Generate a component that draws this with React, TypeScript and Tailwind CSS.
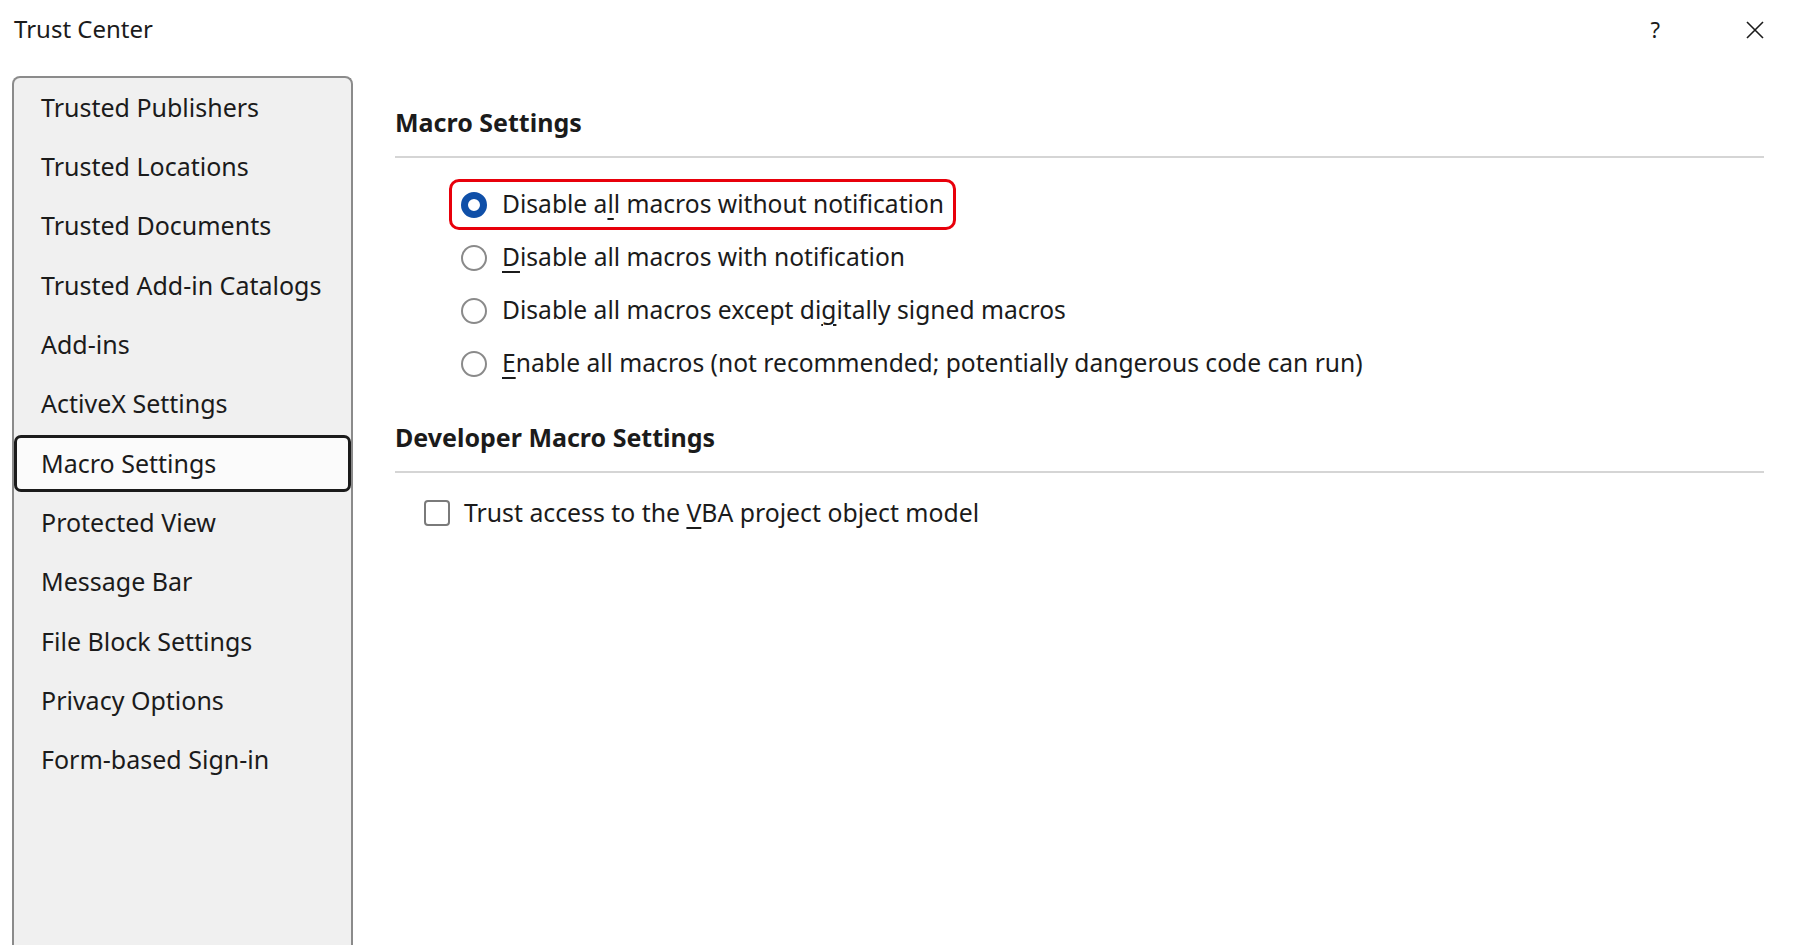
import { useState } from "react";

const navItems = [
  "Trusted Publishers",
  "Trusted Locations",
  "Trusted Documents",
  "Trusted Add-in Catalogs",
  "Add-ins",
  "ActiveX Settings",
  "Macro Settings",
  "Protected View",
  "Message Bar",
  "File Block Settings",
  "Privacy Options",
  "Form-based Sign-in",
];

// label split so the access key letter can be underlined
const macroOptions = [
  { pre: "Disable a", key: "l", post: "l macros without notification" },
  { pre: "", key: "D", post: "isable all macros with notification" },
  { pre: "Disable all macros except di", key: "g", post: "itally signed macros" },
  { pre: "", key: "E", post: "nable all macros (not recommended; potentially dangerous code can run)" },
];

function Radio({ checked }: { checked: boolean }) {
  if (checked) {
    return (
      <span className="w-[26px] h-[26px] rounded-full border-[7px] border-[#0f4fa8] bg-white shrink-0"></span>
    );
  }
  return (
    <span className="w-[26px] h-[26px] rounded-full border-2 border-[#8a8a8a] bg-white shrink-0"></span>
  );
}

export default function App() {
  const [selected, setSelected] = useState(0);
  const [vba, setVba] = useState(false);

  return (
    <div className="w-[1800px] h-[945px] bg-white overflow-hidden flex flex-col text-[#1b1b1b] font-['Noto_Sans',sans-serif]">
      <div className="h-[76px] flex items-start justify-between shrink-0">
        <div className="pl-[14px] pt-[12px] text-[24px] leading-[34px]">Trust Center</div>
        <div className="flex items-center pt-[12px] pr-[36px] gap-[86px]">
          <span className="text-[22px] leading-[34px]">?</span>
          <svg width="18" height="18" viewBox="0 0 18 18" className="mt-[1px]">
            <path d="M1 1 L17 17 M17 1 L1 17" stroke="#1b1b1b" strokeWidth="1.6" fill="none" />
          </svg>
        </div>
      </div>

      <div className="flex flex-1 min-h-0">
        <div className="ml-[12px] w-[341px] bg-[#f0f0f0] border-2 border-b-0 border-[#8b8b8b] rounded-t-[8px] flex flex-col shrink-0">
          {navItems.map((item) =>
            item === "Macro Settings" ? (
              <div key={item} className="h-[59.3px] py-[1px]">
                <div className="h-full bg-[#fbfbfb] border-[3px] border-[#1b1b1b] rounded-[7px] pl-[24px] flex items-center text-[25px]">
                  {item}
                </div>
              </div>
            ) : (
              <div key={item} className="h-[59.3px] pl-[27px] flex items-center text-[25px]">
                {item}
              </div>
            )
          )}
        </div>

        <div className="flex-1 pl-[42px] pr-[36px]">
          <div className="pt-[29px] pb-[17px] text-[25px] font-bold leading-[34px]">Macro Settings</div>
          <div className="h-[2px] bg-[#d5d5d5]"></div>

          <div className="pl-[66px] pt-[20px] flex flex-col">
            {macroOptions.map((opt, i) => (
              <div key={i} className="h-[53px] flex items-center">
                <button
                  onClick={() => setSelected(i)}
                  className={
                    i === 0
                      ? "flex items-center gap-[15px] h-[51px] pl-[9px] pr-[9px] -ml-[12px] border-[3px] border-[#e8000b] rounded-[10px]"
                      : "flex items-center gap-[15px] h-[51px] pl-[12px] pr-[9px] -ml-[12px]"
                  }
                >
                  <Radio checked={selected === i} />
                  <span className="text-[24.6px] whitespace-nowrap">
                    {opt.pre}
                    <span className="underline underline-offset-[5px] decoration-[1.5px]">{opt.key}</span>
                    {opt.post}
                  </span>
                </button>
              </div>
            ))}
          </div>

          <div className="pt-[30px] pb-[17px] text-[25px] font-bold leading-[34px]">Developer Macro Settings</div>
          <div className="h-[2px] bg-[#d5d5d5]"></div>

          <button onClick={() => setVba(!vba)} className="mt-[21px] ml-[29px] flex items-center gap-[14px]">
            <span className="w-[26px] h-[26px] rounded-[4px] border-2 border-[#7a7a7a] bg-white shrink-0"></span>
            <span className="text-[24.8px] whitespace-nowrap">
              Trust access to the <span className="underline underline-offset-[5px] decoration-[1.5px]">V</span>BA project object model
            </span>
          </button>
        </div>
      </div>
    </div>
  );
}
